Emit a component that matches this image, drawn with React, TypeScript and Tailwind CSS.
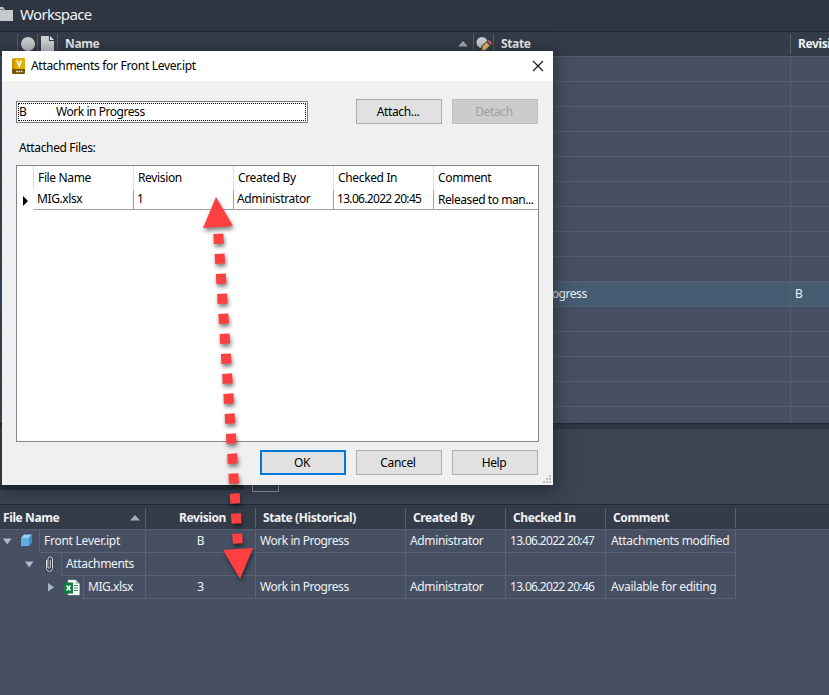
import type { ReactNode } from "react";

const gridRows = Array.from({ length: 15 }, (_, i) => i);
const dashes = Array.from({ length: 16 }, (_, i) => i);

const historyColumns = [
	{ label: "File Name", width: "w-[146px]", pad: "pl-[3px]" },
	{ label: "Revision", width: "w-[110px]", pad: "pl-[33px]" },
	{ label: "State (Historical)", width: "w-[150px]", pad: "pl-[7px]" },
	{ label: "Created By", width: "w-[100px]", pad: "pl-[7px]" },
	{ label: "Checked In", width: "w-[100px]", pad: "pl-[7px]" },
	{ label: "Comment", width: "w-[130px]", pad: "pl-[7px]" },
];

const historyRows = [
	{ name: "Front Lever.ipt", indent: "w-[40px]", tracking: "tracking-[-0.25px]", revision: "B", state: "Work in Progress", by: "Administrator", date: "13.06.2022 20:47", comment: "Attachments modified" },
	{ name: "Attachments", indent: "w-[62px]", tracking: "tracking-[-0.35px]", revision: "", state: "", by: "", date: "", comment: "" },
	{ name: "MIG.xlsx", indent: "w-[84px]", tracking: "tracking-[-0.45px]", revision: "3", state: "Work in Progress", by: "Administrator", date: "13.06.2022 20:46", comment: "Available for editing" },
];

const attachedColumns = ["File Name", "Revision", "Created By", "Checked In", "Comment"];
const attachedFile = ["MIG.xlsx", "1", "Administrator", "13.06.2022 20:45", "Released to man..."];

function Separator() {
	return <span className="h-5 w-px shrink-0 bg-[#536171]" />;
}

function Button({ children, variant = "normal" }: { children: ReactNode; variant?: "normal" | "default" | "disabled" }) {
	const styles = {
		normal: "border border-[#adadad] bg-[#e1e1e1] text-black",
		default: "border-2 border-[#0078d7] bg-[#e1e1e1] text-black",
		disabled: "border border-[#bfbfbf] bg-[#cccccc] text-[#a0a0a0]",
	};
	return (
		<button className={`flex h-[25px] w-[86px] items-center justify-center pr-[2px] ${styles[variant]}`} disabled={variant === "disabled"}>
			{children}
		</button>
	);
}

function SortIcon() {
	return (
		<svg width="10" height="6" viewBox="0 0 10 6" className="shrink-0">
			<path d="M0 5.5 5 0l5 5.5z" fill="#a7adb7" />
		</svg>
	);
}

function TreeIcons({ level }: { level: number }) {
	if (level === 0) {
		return (
			<svg width="39" height="22" viewBox="0 0 39 22">
				<path d="M3 8.500h8.500l-4.250 6z" fill="#afb8c5" />
				<path d="M21 8l3-3.500h8L29 8z" fill="#96d1f5" />
				<path d="M29 8l3-3.500v8.500l-3 3z" fill="#3d8bc8" />
				<path d="M21 8h8v8h-8z" fill="#60afe3" />
			</svg>
		);
	}
	if (level === 1) {
		return (
			<svg width="61" height="22" viewBox="0 0 61 22">
				<path d="M25 8.500h8.500l-4.250 6z" fill="#afb8c5" />
				<path d="M46.500 7v8.500a3 3 0 0 0 6 0V6a2.300 2.300 0 0 0-4.600 0v8a1.200 1.200 0 0 0 2.400 0V7" fill="none" stroke="#2f353f" strokeWidth="2" />
				<path d="M46.500 7v8.500a3 3 0 0 0 6 0V6a2.300 2.300 0 0 0-4.600 0v8a1.200 1.200 0 0 0 2.400 0V7" fill="none" stroke="#d8dadd" strokeWidth="1" />
			</svg>
		);
	}
	return (
		<svg width="83" height="22" viewBox="0 0 83 22">
			<path d="M48 7v8.500l6-4.250z" fill="#afb8c5" />
			<path d="M68 4h7.500l4 4v11H68z" fill="#fff" stroke="#c7c9c8" strokeWidth=".5" />
			<path d="M75.500 4v4h4" fill="#c3c6c3" />
			<path d="M74 9.500h4M74 12h4M74 14.500h4" stroke="#388657" strokeWidth="1.200" />
			<path d="M64 6.500h9v11h-9z" fill="#107c41" />
			<path d="m66.500 9.500 4 5m0-5-4 5" stroke="#fff" strokeWidth="1.500" />
		</svg>
	);
}

function WorkspaceGrid() {
	return (
		<section className="flex h-[392px] flex-col overflow-hidden border-t border-[#222733] bg-[#475063]">
			<div className="flex h-6 shrink-0 items-center overflow-hidden bg-[#353c49] font-bold">
				<div className="w-[17px] shrink-0" />
				<Separator />
				<svg width="19" height="24" viewBox="0 0 19 24" className="shrink-0">
					<circle cx="10" cy="12" r="7" fill="#d0d1d3" />
				</svg>
				<Separator />
				<svg width="19" height="24" viewBox="0 0 19 24" className="shrink-0">
					<path d="M3 4h8v5h5v10H3z" fill="#d5d6d7" />
					<path d="m12 4 4 4h-4z" fill="#eee" />
				</svg>
				<Separator />
				<div className="flex w-[415px] shrink-0 items-center justify-between pr-[5px] pl-[7px]">
					<span>Name</span>
					<SortIcon />
				</div>
				<Separator />
				<svg width="19" height="24" viewBox="0 0 19 24" className="shrink-0">
					<circle cx="8" cy="10.500" r="5.500" fill="#d0d1d1" />
					<path d="m6.500 19 1-5 7-6.500 4 4-7 7.500z" fill="#404652" />
					<path d="m8 18 .8-3.800 3.700-3.700 3 3-4 4.500z" fill="#edc367" />
					<path d="m13.500 9.500 1.500-1.500 3.200 3.200-1.500 1.500z" fill="#ec5961" />
				</svg>
				<Separator />
				<span className="w-[296px] shrink-0 pl-[7px]">State</span>
				<Separator />
				<span className="shrink-0 pl-[7px] tracking-[-0.4px]">Revision</span>
			</div>
			{gridRows.map((row) => (
				<div
					key={row}
					className={`flex h-[25px] shrink-0 items-center border-t border-[#535f70] ${row === 9 ? "bg-[#455c72]" : "bg-[#475063]"}`}
				>
					<div className="flex h-full w-[791px] items-center border-r border-[#535f70] pl-[498px] tracking-[-0.45px]">
						{row === 9 ? "Work in Progress" : ""}
					</div>
					<span className="pl-1">{row === 9 ? "B" : ""}</span>
				</div>
			))}
		</section>
	);
}

function HistoryGrid() {
	return (
		<section className="h-[191px] border-t border-[#222934] bg-[#475063]">
			<div className="flex h-6 items-center bg-[#353c49] pt-px font-bold">
				{historyColumns.map((column, index) => (
					<div key={column.label} className={`flex h-5 items-center justify-between border-r border-[#536171] ${column.width} ${column.pad}`}>
						<span className="tracking-[-0.4px] whitespace-nowrap">{column.label}</span>
						{index === 0 && (
							<span className="pr-[5px]">
								<SortIcon />
							</span>
						)}
					</div>
				))}
			</div>
			<div className="border-t border-[#535f70]">
				{historyRows.map((row, level) => (
					<div key={row.name} className="flex h-[23px] whitespace-nowrap text-[#f0f2f4]">
						<div className="flex w-[146px] border-r border-[#586475]">
							<div className={`shrink-0 border-r border-[#586475] ${row.indent}`}>
								<TreeIcons level={level} />
							</div>
							<div className={`flex flex-1 items-center border-b border-[#586475] pl-1 ${row.tracking}`}>{row.name}</div>
						</div>
						<div className="flex w-[110px] items-center justify-center border-r border-b border-[#586475]">{row.revision}</div>
						<div className="flex w-[150px] items-center border-r border-b border-[#586475] pl-1 tracking-[-0.45px]">{row.state}</div>
						<div className="flex w-[100px] items-center border-r border-b border-[#586475] pl-1">{row.by}</div>
						<div className="flex w-[100px] items-center border-r border-b border-[#586475] pl-1 tracking-[-0.68px]">{row.date}</div>
						<div className="flex w-[130px] items-center border-r border-b border-[#586475] pl-[5px]">{row.comment}</div>
					</div>
				))}
			</div>
		</section>
	);
}

function AttachmentsDialog() {
	return (
		<div className="absolute top-[51px] left-[2px] flex h-[434px] w-[551px] flex-col bg-[#f0f0f0] text-black shadow-[0_3px_16px_3px_rgba(20,25,30,0.55)]">
			<div className="flex h-[30px] items-center bg-white pr-[9px] pl-[9px]">
				<svg width="14" height="16" viewBox="0 0 14 16" className="mb-px">
					<path d="M1 1 3 0h10l1 1v14l-1 1H2l-1-1z" fill="#c79400" />
					<path d="M3.500 0H13l1 1v10H3.500z" fill="#dfb000" />
					<path d="M1 11h13v4l-1 1H2l-1-1z" fill="#755100" />
					<path d="m6 2.500 2.200 5.500 2.200-5.500" fill="none" stroke="#fff" strokeWidth="1.600" />
					<path d="M5 13.500h7" stroke="#eee4cb" strokeWidth="1.500" strokeDasharray="1.800 .6" />
				</svg>
				<span className="ml-[6px] flex-1 tracking-[-0.3px]">Attachments for Front Lever.ipt</span>
				<svg width="12" height="12" viewBox="0 0 12 12">
					<path d="m1 1 10 10m0-10L1 11" stroke="#111" strokeWidth="1.100" />
				</svg>
			</div>
			<div className="flex flex-1 flex-col px-[14px] pt-[18px]">
				<div className="flex items-center">
					<div className="mt-px h-[22px] w-[292px] border border-[#7a7e87] bg-white p-px">
						<div className="flex h-full items-center border border-dotted border-black">
							<span className="w-[37px]">B</span>
							<span className="tracking-[-0.45px]">Work in Progress</span>
						</div>
					</div>
					<div className="ml-12 flex gap-[10px]">
						<Button>Attach...</Button>
						<Button variant="disabled">Detach</Button>
					</div>
				</div>
				<div className="mt-[14px] h-[27px] pl-[3px] leading-5">Attached Files:</div>
				<div className="h-[277px] w-[523px] border border-[#828790] bg-white">
					<div className="flex h-6 pl-4">
						{attachedColumns.map((label) => (
							<div key={label} className="flex w-[100px] items-center border-l border-[#e2e2e2] pl-1">
								{label}
							</div>
						))}
					</div>
					<div className="flex h-5 whitespace-nowrap">
						<div className="flex w-4 items-center pt-px pl-[6px]">
							<svg width="5" height="10" viewBox="0 0 5 10">
								<path d="M0 0v10l5-5z" fill="#000" />
							</svg>
						</div>
						{attachedFile.map((value, index) => (
							<div
								key={value}
								className={`flex items-center border-b border-l border-b-[#a0a0a0] ${index === 0 ? "border-l-transparent" : "border-l-[#a0a0a0]"} ${
									index === 4 ? "w-[105px] pt-px pl-1 tracking-[-0.45px]" : "w-[100px] pb-px pl-[3px]"
								} ${index === 3 ? "tracking-[-0.68px]" : ""} ${index === 0 ? "tracking-[-0.4px]" : ""}`}
							>
								{value}
							</div>
						))}
					</div>
				</div>
				<div className="mt-2 flex justify-end gap-[10px] pr-px">
					<Button variant="default">OK</Button>
					<Button>Cancel</Button>
					<Button>Help</Button>
				</div>
			</div>
			<svg width="8" height="8" viewBox="0 0 8 8" className="absolute right-[2px] bottom-[2px]">
				<path d="M6 0h2v2H6zM3 3h2v2H3zM6 3h2v2H6zM0 6h2v2H0zM3 6h2v2H3zM6 6h2v2H6z" fill="#bdbdbd" />
			</svg>
		</div>
	);
}

// Dashed double arrow linking the same file in both lists
function LinkArrow() {
	return (
		<svg width="70" height="400" viewBox="195 190 70 400" className="absolute top-[190px] left-[195px] drop-shadow-[1px_3px_2px_rgba(0,0,0,0.5)]">
			<g fill="#ff4040">
				<path d="m216 197 17 29-30 2z" />
				{dashes.map((i) => (
					<rect key={i} x="-5" y="-5" width="10" height="10" transform={`translate(${218.6 + i * 1.26} ${238.8 + i * 19.98}) rotate(-3.500)`} />
				))}
				<path d="m223 550 30-2-13 31z" />
			</g>
		</svg>
	);
}

export default function App() {
	return (
		<main className="relative flex h-[695px] w-[829px] flex-col overflow-hidden bg-[#475063] font-['Noto_Sans','Open_Sans',sans-serif] text-[12px] leading-4 tracking-[-0.35px] text-[#f0f2f4]">
			<header className="flex h-[31px] shrink-0 items-center bg-[#2f3541] pb-[3px]">
				<svg width="20" height="24" viewBox="0 0 20 24">
					<path d="M0 5h3l2 3h8v11H0z" fill="#c8c9ca" />
					<path d="M0 7.500h3l1 1" fill="none" stroke="#666d75" />
				</svg>
				<h1 className="text-[15px] tracking-[-0.65px]">Workspace</h1>
			</header>
			<WorkspaceGrid />
			<div className="h-[6px] border-t border-[#222934] bg-[#2f3541]" />
			<div className="h-[75px] bg-[#3b4452] pt-[56px]">
				<div className="flex items-start">
					<div className="h-[5px] w-[244px] bg-[#272e38]" />
					<div className="ml-2 h-[7px] w-[27px] border border-t-0 border-[#a2a8b1]" />
				</div>
			</div>
			<HistoryGrid />
			<AttachmentsDialog />
			<LinkArrow />
		</main>
	);
}
